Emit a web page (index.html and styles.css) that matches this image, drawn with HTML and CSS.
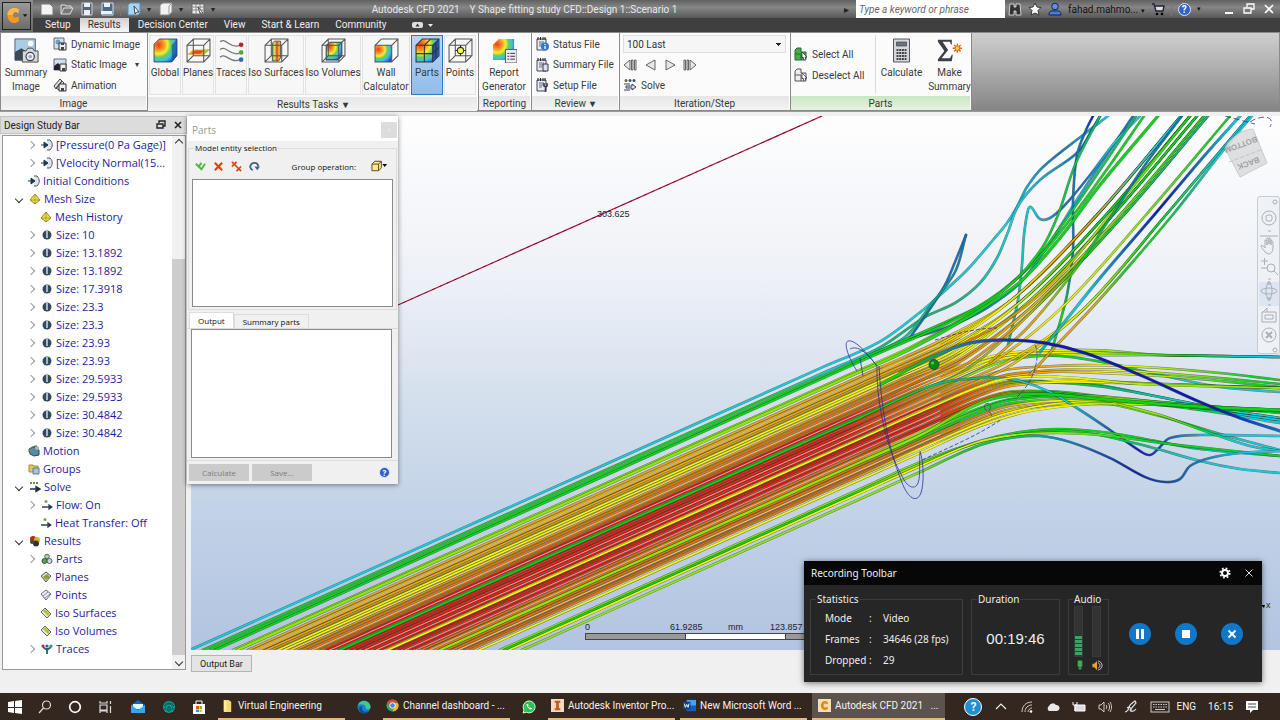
FILE: index.html
```html
<!DOCTYPE html>
<html lang="en">
<head>
<meta charset="utf-8">
<title>Autodesk CFD 2021</title>
<link rel="stylesheet" href="styles.css">
</head>
<body>
<svg class="sprite" aria-hidden="true">
  <defs>
    <radialGradient id="heat" cx="0.2" cy="0.25" r="0.95">
      <stop offset="0" stop-color="#f03a1c"/><stop offset=".25" stop-color="#f79a1e"/><stop offset=".42" stop-color="#f4ec3a"/>
      <stop offset=".58" stop-color="#62cf5a"/><stop offset=".74" stop-color="#3cc0e8"/><stop offset="1" stop-color="#1c4fc0"/>
    </radialGradient>
    <linearGradient id="heatBar" x1="0" x2="1" y1="0" y2="0"><stop offset="0" stop-color="#3cb0d8"/><stop offset=".3" stop-color="#f4e03a"/><stop offset=".55" stop-color="#e23a1c"/><stop offset=".8" stop-color="#f4c03a"/><stop offset="1" stop-color="#3c9ad8"/></linearGradient>
    <symbol id="wire" viewBox="0 0 24 24"><path d="M1 7h16v16H1zM7 1h16v16H7zM1 7l6-6M17 7l6-6M17 23l6-6M1 23l6-6" fill="none" stroke="#555" stroke-width="1"/></symbol>
    <symbol id="i-global" viewBox="0 0 24 24"><path d="M1 6l5-5h17v16l-5 6H1z" fill="url(#heat)" stroke="#335" stroke-width=".8"/><path d="M18 23V7l5-6v16z" fill="#1c4b9c" opacity=".7"/></symbol>
    <symbol id="i-planes" viewBox="0 0 24 24"><path d="M1 16l6-5h16l-6 5z" fill="#f0a82a"/><path d="M5 15l4-3h8l-3 3z" fill="#e2491c"/><path d="M17 16l6-5h-4l-4 5z" fill="#9ccf3c"/><use href="#wire"/></symbol>
    <symbol id="i-traces" viewBox="0 0 26 24"><g fill="none" stroke="#777" stroke-width="1.3"><path d="M1 3c7-5 9 7 20 4"/><path d="M1 11c7-5 9 7 20 4"/><path d="M1 19c7-5 9 6 20 3"/></g><circle cx="23" cy="6" r="2.4" fill="#b22"/><circle cx="23" cy="14" r="2.4" fill="#5a3"/><circle cx="23" cy="21.500" r="2.4" fill="#36b"/></symbol>
    <symbol id="i-isosurf" viewBox="0 0 24 24"><path d="M8 5l2-2h6v16l-2 3H8z" fill="url(#heatBar)" stroke="#543" stroke-width=".8"/><use href="#wire"/></symbol>
    <symbol id="i-isovol" viewBox="0 0 24 24"><path d="M5 7l4-3h11v13l-4 4H5z" fill="url(#heat)" stroke="#245" stroke-width="1"/><use href="#wire"/></symbol>
    <symbol id="i-wall" viewBox="0 0 24 24"><path d="M1 7h16v16H1z" fill="url(#heat)"/><path d="M1 7h16v16H1zM7 1h16v16l-6 6M1 7l6-6M17 7l6-6" fill="none" stroke="#555"/></symbol>
    <symbol id="i-partcube" viewBox="0 0 24 24"><path d="M1 7l6-6h16v16l-6 6H1z" fill="url(#heat)" stroke="#333"/><path d="M17 23V7l6-6v16z" fill="#2453a8"/><path d="M1 7h16v16M9 23V7l6-6M1 15h16l6-6M17 7l6-6M20 20V4" fill="none" stroke="#334" stroke-width="1"/></symbol>
    <symbol id="i-points" viewBox="0 0 24 24"><use href="#wire"/><path d="M12 7v10M7 12h10" stroke="#222"/><circle cx="12" cy="12" r="3" fill="#ef3" stroke="#333"/></symbol>
    <symbol id="i-report" viewBox="0 0 26 26"><path d="M1 7l6-6h16v16l-6 6H1z" fill="url(#heat)"/><path d="M14 12h12v14H14z" fill="#eee" stroke="#556"/><path d="M16 16h2m1 0h5m-8 3h2m1 0h5m-8 3h2m1 0h5" stroke="#334"/></symbol>
    <symbol id="i-summary" viewBox="0 0 27 27"><path d="M1 1h22v23H1z" fill="#a9cde4" stroke="#557"/><path d="M1 15l7-4 6 4v9H1z" fill="#3a4a55"/><circle cx="18" cy="6" r="3" fill="#ffe"/><path d="M9 14h4l2-3h5l2 3h4v12H9z" fill="#d5d9de" stroke="#444"/><circle cx="17.500" cy="20" r="4.500" fill="#eef" stroke="#444" stroke-width="1.300"/><circle cx="17.500" cy="20" r="2" fill="#9ab"/></symbol>
    <symbol id="i-dyn" viewBox="0 0 14 14"><path d="M1 1h10v11H1z" fill="#cfe2ef" stroke="#667"/><circle cx="5" cy="5" r="2.500" fill="#68a0c8"/><path d="M6 6h7v7H6z" fill="#eee" stroke="#333"/><path d="M8 6h3v2H8zM8 10h3v3H8z" fill="#444"/></symbol>
    <symbol id="i-stat" viewBox="0 0 14 14"><path d="M1 1h12v11H1z" fill="#cfe0ea" stroke="#667"/><path d="M1 8l4-3 4 4v3H1z" fill="#223"/><path d="M7 6h6v7H7z" fill="#eee" stroke="#333"/><path d="M9 10h3v3H9z" fill="#444"/></symbol>
    <symbol id="i-anim" viewBox="0 0 14 14"><path d="M1 8l6-7 2 2-6 8zM3 10l6-7 2 2-5 7z" fill="#ddd" stroke="#444"/><path d="M6 6h7v7H6z" fill="#eee" stroke="#333"/><path d="M8 10h3v3H8z" fill="#444"/></symbol>
    <symbol id="i-file" viewBox="0 0 14 14"><path d="M2 2h9v11H2z" fill="#e8ecf0" stroke="#445"/><path d="M3 0v3M5.500 0v3M8 0v3M10 0v3" stroke="#223"/><path d="M4 5h5M4 7h5M4 9h3" stroke="#667"/></symbol>
    <symbol id="i-solve" viewBox="0 0 14 14"><circle cx="3" cy="2.500" r="1.500" fill="#763"/><circle cx="7" cy="2.500" r="1.500" fill="#357"/><circle cx="11" cy="2.500" r="1.500" fill="#357"/><path d="M3 8h6V6l4 3-4 3v-2H3zM1 6h6M1 12h6" fill="#dde" stroke="#345"/></symbol>
    <symbol id="i-selall" viewBox="0 0 14 14"><path d="M1 3l2-2h4v4h5v7l-2 1H1z" fill="#4cae3c" stroke="#264"/><path d="M1 7h6v6" fill="none" stroke="#264"/><path d="M8 5l5 5H11l1 3-2 0-1-3-1 1z" fill="#fff" stroke="#222" stroke-width=".7"/></symbol>
    <symbol id="i-desel" viewBox="0 0 14 14"><path d="M1 3l2-2h4v4h5v7l-2 1H1z" fill="#eee" stroke="#555"/><path d="M1 7h6v6" fill="none" stroke="#555"/><path d="M8 5l5 5H11l1 3-2 0-1-3-1 1z" fill="#fff" stroke="#222" stroke-width=".7"/></symbol>
    <symbol id="i-calc" viewBox="0 0 18 25"><path d="M1 1h16v23H1z" fill="#d4d8dc" stroke="#556"/><path d="M4 4h10v4H4z" fill="#6a7480" stroke="#333" stroke-width=".6"/><path d="M4 12h10M4 15h10M4 18h10M4 21h10" stroke="#444" stroke-width="2" stroke-dasharray="2 .7"/></symbol>
    <symbol id="i-sigma" viewBox="0 0 27 25"><path d="M1 1h15v5h-1l-1-3H6l6 9-7 9h9l2-4h1l-1 7H1v-2l7-9-7-10z" fill="#3a4046"/><path d="M22 5v10M17 10h10M18.500 6.500l7 7M25.500 6.500l-7 7" stroke="#e06a10" stroke-width="1.500"/><circle cx="22" cy="10" r="2.500" fill="#ffc83a" stroke="#e06a10"/></symbol>
    <symbol id="t-bc" viewBox="0 0 12 12"><path d="M6 1h3c3 3 3 7 0 10H6" fill="#dde4ea" stroke="#556"/><path d="M0 6h4M3 3l4 3-4 3z" fill="#1f3a4d" stroke="#1f3a4d"/></symbol>
    <symbol id="t-mesh" viewBox="0 0 12 12"><path d="M6 1l5 6-5 4-5-4z" fill="#f0e040" stroke="#776a20" stroke-width=".8"/><path d="M6 1v10M1 7h10" stroke="#998a30" stroke-width=".7"/></symbol>
    <symbol id="t-size" viewBox="0 0 12 12"><circle cx="6" cy="6" r="4.500" fill="#34495a"/><path d="M6 2v7" stroke="#eef" stroke-width="1.300"/></symbol>
    <symbol id="t-motion" viewBox="0 0 12 12"><path d="M1 4l5-2 5 3v5l-5 1-4-2z" fill="#5f88a8" stroke="#345"/><path d="M1 7c0-6 8-6 8-6" fill="none" stroke="#485" stroke-width="1.300"/><circle cx="9" cy="3" r="2" fill="#9bb"/></symbol>
    <symbol id="t-groups" viewBox="0 0 12 12"><path d="M1 2h4l1 1h4v6H1z" fill="#e6c768" stroke="#a88a38"/><path d="M5 5h6v6H5z" fill="#a8c4dc" stroke="#57a"/></symbol>
    <symbol id="t-solve" viewBox="0 0 12 12"><path d="M1 2h2m1 0h2m1 0h2" stroke="#788a58" stroke-width="2"/><path d="M1 8h8M7 5.500l4 2.500-4 2.500z" stroke="#234" stroke-width="1.300"/></symbol>
    <symbol id="t-flow" viewBox="0 0 12 12"><circle cx="5" cy="2.500" r="1.500" fill="#8a9a60"/><path d="M1 8h8M8 6l3 2-3 2z" stroke="#345" stroke-width="1.300"/></symbol>
    <symbol id="t-results" viewBox="0 0 12 12"><circle cx="4" cy="4" r="3" fill="#b22b1b"/><circle cx="8" cy="5" r="3" fill="#d8b422"/><circle cx="7" cy="8.500" r="3" fill="#333"/><circle cx="3" cy="7" r="2" fill="#353"/></symbol>
    <symbol id="t-parts" viewBox="0 0 12 12"><circle cx="6" cy="3.500" r="2.300" fill="#b9c9b9" stroke="#565"/><circle cx="3.500" cy="8" r="2.500" fill="#6ba04a" stroke="#354"/><circle cx="8.500" cy="8" r="2.500" fill="#ccd6dc" stroke="#566"/></symbol>
    <symbol id="t-planes" viewBox="0 0 12 12"><path d="M1 5l5-4 5 4-5 6z" fill="#d9dcc8" stroke="#555"/><path d="M3 6l4-3 3 3-4 3z" fill="#8aa23a"/></symbol>
    <symbol id="t-points" viewBox="0 0 12 12"><path d="M1 5l5-4 5 4-5 6z" fill="#eef" stroke="#667"/><path d="M3 7l5-4M5 9l5-4" stroke="#889"/></symbol>
    <symbol id="t-iso" viewBox="0 0 12 12"><path d="M1 5l4-4 6 6-4 4z" fill="#e6e9d8" stroke="#667"/><path d="M3 4l5 5 2-2-5-5z" fill="#b2c22a"/></symbol>
    <symbol id="t-trace" viewBox="0 0 12 12"><path d="M6 11V5M6 7L2 4M6 7l4-3" stroke="#267" stroke-width="1.800"/><circle cx="2" cy="3" r="1.600" fill="#c22"/><circle cx="6" cy="3" r="1.600" fill="#26a"/><circle cx="10" cy="3" r="1.600" fill="#399"/></symbol>
  </defs>
</svg>

<header class="top">
  <button class="app" aria-label="Application menu"><svg viewBox="0 0 30 28"><path d="M18 7C14 3 5 5 5 13s8 12 13 6l-1-5c-3 3-6 2-6-1s3-5 6-2z" fill="#f39a1e"/><path d="M18 7l-1 4c-3-3-6-1-6 2H5c0-8 9-10 13-6z" fill="#ffb94a"/><path d="M22 12h5l-2.500 3z" fill="#111"/></svg></button>
  <div class="topcol">
    <div class="titlebar">
      <div class="quick">
        <button aria-label="New"><svg viewBox="0 0 14 14"><path d="M1 2h9l3 3v8H1z" fill="#f4f4f4" stroke="#777"/></svg></button>
        <button aria-label="Open"><svg viewBox="0 0 14 14"><path d="M1 12V3h4l1 1h5v2M1 12l3-6h9l-3 6z" fill="#777" stroke="#ddd"/></svg></button>
        <button aria-label="Save"><svg viewBox="0 0 14 14"><path d="M2 1h10v12H2z" fill="#566573" stroke="#ccd"/><path d="M4 1h6v4H4zM4 8h6v5H4z" fill="#eee"/></svg></button>
        <button aria-label="Save all"><svg viewBox="0 0 14 14"><path d="M2 1h11v12H2z" fill="#4a6c88" stroke="#cde"/><path d="M4 1h6v4H4zM1 9h11v3H1z" fill="#eef"/></svg></button>
        <i class="vsep"></i>
        <button aria-label="Select"><svg viewBox="0 0 14 14"><path d="M1 3l2-2h10v10l-2 2H1z" fill="#a9d4ee" stroke="#5b8fb0"/><path d="M7 4l5 6H9.500L8 12z" fill="#fff" stroke="#222" stroke-width=".8"/></svg></button>
        <small>▾</small>
        <button aria-label="Shading"><svg viewBox="0 0 14 14"><path d="M1 3l3-2h9v9l-3 3H1z" fill="#f2f2f2" stroke="#888"/><path d="M10 13V4l3-3" fill="none" stroke="#999"/></svg></button>
        <small>▾</small>
        <button aria-label="Table"><svg viewBox="0 0 14 14"><path d="M1 2h12v10H1z" fill="#eee" stroke="#666"/><path d="M1 5h12M1 8h12M5 2v10M9 2v10" stroke="#888"/><path d="M7 5l5 6H9z" fill="#fff" stroke="#222" stroke-width=".7"/></svg></button>
        <small>▾</small>
      </div>
      <h1>Autodesk CFD 2021 &nbsp;&nbsp; Y Shape fitting study CFD::Design 1::Scenario 1</h1>
      <span class="arrow">▸</span>
      <input class="search" type="text" placeholder="Type a keyword or phrase" aria-label="Search help">
      <div class="account">
        <button aria-label="Find"><svg viewBox="0 0 14 14"><path d="M2 2h4v3h2V2h4l1 11H8V9H6v4H1z" fill="#333" stroke="#eee" stroke-width=".8"/></svg></button>
        <button aria-label="Favourites"><svg viewBox="0 0 14 14"><path d="M7 1l2 4 4 .5-3 3 1 4.500-4-2-4 2 1-4.500-3-3L5 5z" fill="#fff" stroke="#333"/></svg></button>
        <button aria-label="Profile"><svg viewBox="0 0 14 14"><circle cx="7" cy="4.500" r="3.300" fill="#5f90e8" stroke="#124"/><path d="M1 13c0-5 3-4 6-4s6-1 6 4z" fill="#4a7ade" stroke="#124"/></svg></button>
        <button class="user">fahad.mahmo... <small>▾</small></button>
        <button aria-label="Store"><svg viewBox="0 0 14 14"><path d="M1 2h2l2 7h7l1-5H4" fill="#ddd" stroke="#223" stroke-width="1.400"/><circle cx="6" cy="12" r="1.300"/><circle cx="11" cy="12" r="1.300"/></svg></button>
        <i class="vsep"></i>
        <button class="help" aria-label="Help">?</button>
        <small>▾</small>
      </div>
      <div class="winbtns">
        <button aria-label="Minimise"><svg viewBox="0 0 12 12"><path d="M2 10h8" stroke="#fff" stroke-width="2"/></svg></button>
        <button aria-label="Restore"><svg viewBox="0 0 12 12"><path d="M4 4V1h7v5H8M1 5h7v5H1z" fill="none" stroke="#fff" stroke-width="1.300"/></svg></button>
        <button aria-label="Close"><svg viewBox="0 0 12 12"><path d="M2 2l8 8M10 2l-8 8" stroke="#fff" stroke-width="1.600"/></svg></button>
      </div>
    </div>
    <nav class="tabs">
      <button>Setup</button><button class="on">Results</button><button>Decision Center</button><button>View</button><button>Start &amp; Learn</button><button>Community</button>
      <button class="mini" aria-label="Minimise ribbon"><svg viewBox="0 0 22 8"><rect x="0" y="1" width="11" height="6" rx="2" fill="#ddd"/><path d="M3.500 5.500l2-3 2 3z" fill="#333"/><path d="M16 3h5l-2.500 3z" fill="#eee"/></svg></button>
    </nav>
  </div>
</header>

<section class="ribbon">
  <div class="panel p-image">
    <div class="body">
      <button class="big"><svg><use href="#i-summary"/></svg>Summary<br>Image</button>
      <div class="stack">
        <button><svg><use href="#i-dyn"/></svg>Dynamic Image</button>
        <button><svg><use href="#i-stat"/></svg>Static Image<small>▾</small></button>
        <button><svg><use href="#i-anim"/></svg>Animation</button>
      </div>
    </div>
    <footer>Image</footer>
  </div>
  <div class="panel p-tasks">
    <div class="body">
      <button class="big box"><svg><use href="#i-global"/></svg>Global</button>
      <button class="big box"><svg><use href="#i-planes"/></svg>Planes</button>
      <button class="big box"><svg><use href="#i-traces"/></svg>Traces</button>
      <button class="big box wide"><svg><use href="#i-isosurf"/></svg>Iso Surfaces</button>
      <button class="big box wide"><svg><use href="#i-isovol"/></svg>Iso Volumes</button>
      <button class="big box mid"><svg><use href="#i-wall"/></svg>Wall<br>Calculator</button>
      <button class="big box active"><svg><use href="#i-partcube"/></svg>Parts</button>
      <button class="big box"><svg><use href="#i-points"/></svg>Points</button>
    </div>
    <footer>Results Tasks <b>▾</b></footer>
  </div>
  <div class="panel p-rep">
    <div class="body"><button class="big"><svg><use href="#i-report"/></svg>Report<br>Generator</button></div>
    <footer>Reporting</footer>
  </div>
  <div class="panel p-review">
    <div class="body"><div class="stack">
      <button><svg viewBox="0 0 14 14"><use href="#i-file"/><circle cx="10" cy="9.500" r="4" fill="#2b78d8"/><path d="M10 7v1m0 1v3" stroke="#fff" stroke-width="1.300"/></svg>Status File</button>
      <button><svg viewBox="0 0 14 14"><use href="#i-file"/><path d="M8 6h5v7H8z" fill="#dde" stroke="#335"/></svg>Summary File</button>
      <button><svg viewBox="0 0 14 14"><use href="#i-file"/><path d="M9 5v3l1.500 1L12 8V5M10.500 9v5" fill="none" stroke="#335" stroke-width="1.500"/></svg>Setup File</button>
    </div></div>
    <footer>Review <b>▾</b></footer>
  </div>
  <div class="panel p-iter">
    <div class="body"><div class="stack">
      <select aria-label="Iteration"><option>100 Last</option></select>
      <div class="steps">
        <button aria-label="First"><svg viewBox="0 0 14 14"><path d="M7 2v10L1 7zM8.500 2H10v10H8.500zM11.500 2H13v10h-1.500z"/></svg></button>
        <button aria-label="Previous"><svg viewBox="0 0 14 14"><path d="M12 2v10L3 7z"/></svg></button>
        <button aria-label="Next"><svg viewBox="0 0 14 14"><path d="M3 2v10l9-5z"/></svg></button>
        <button aria-label="Last"><svg viewBox="0 0 14 14"><path d="M7 2v10l6-5zM1 2h1.500v10H1zM4 2h1.500v10H4z"/></svg></button>
      </div>
      <button><svg><use href="#i-solve"/></svg>Solve</button>
    </div></div>
    <footer>Iteration/Step</footer>
  </div>
  <div class="panel p-parts">
    <div class="body">
      <div class="stack two">
        <button><svg><use href="#i-selall"/></svg>Select All</button>
        <button><svg><use href="#i-desel"/></svg>Deselect All</button>
      </div>
      <button class="big"><svg><use href="#i-calc"/></svg>Calculate</button>
      <button class="big"><svg><use href="#i-sigma"/></svg>Make<br>Summary</button>
    </div>
    <footer class="green">Parts</footer>
  </div>
  <div class="filler"></div>
</section>

<main class="work">
  <aside class="study">
    <div class="bar"><h2>Design Study Bar</h2>
      <button aria-label="Float"><svg viewBox="0 0 10 10"><path d="M3 3V1h6v5H7M1 4h6v4H1z" fill="none" stroke="#222" stroke-width="1.400"/></svg></button>
      <button aria-label="Close"><svg viewBox="0 0 10 10"><path d="M2 2l6 6M8 2l-6 6" stroke="#222" stroke-width="1.600"/></svg></button>
    </div>
    <div class="treebox">
      <ul class="tree">
        <li class="l2 c"><svg><use href="#t-bc"/></svg>[Pressure(0 Pa Gage)]</li>
        <li class="l2 c"><svg><use href="#t-bc"/></svg>[Velocity Normal(15...</li>
        <li class="l1"><svg><use href="#t-bc"/></svg>Initial Conditions</li>
        <li class="l1 o"><svg><use href="#t-mesh"/></svg>Mesh Size</li>
        <li class="l2"><svg><use href="#t-mesh"/></svg>Mesh History</li>
        <li class="l2 c"><svg><use href="#t-size"/></svg>Size: 10</li>
        <li class="l2 c"><svg><use href="#t-size"/></svg>Size: 13.1892</li>
        <li class="l2 c"><svg><use href="#t-size"/></svg>Size: 13.1892</li>
        <li class="l2 c"><svg><use href="#t-size"/></svg>Size: 17.3918</li>
        <li class="l2 c"><svg><use href="#t-size"/></svg>Size: 23.3</li>
        <li class="l2 c"><svg><use href="#t-size"/></svg>Size: 23.3</li>
        <li class="l2 c"><svg><use href="#t-size"/></svg>Size: 23.93</li>
        <li class="l2 c"><svg><use href="#t-size"/></svg>Size: 23.93</li>
        <li class="l2 c"><svg><use href="#t-size"/></svg>Size: 29.5933</li>
        <li class="l2 c"><svg><use href="#t-size"/></svg>Size: 29.5933</li>
        <li class="l2 c"><svg><use href="#t-size"/></svg>Size: 30.4842</li>
        <li class="l2 c"><svg><use href="#t-size"/></svg>Size: 30.4842</li>
        <li class="l1"><svg><use href="#t-motion"/></svg>Motion</li>
        <li class="l1"><svg><use href="#t-groups"/></svg>Groups</li>
        <li class="l1 o"><svg><use href="#t-solve"/></svg>Solve</li>
        <li class="l2 c"><svg><use href="#t-flow"/></svg>Flow: On</li>
        <li class="l2"><svg><use href="#t-flow"/></svg>Heat Transfer: Off</li>
        <li class="l1 o"><svg><use href="#t-results"/></svg>Results</li>
        <li class="l2 c"><svg><use href="#t-parts"/></svg>Parts</li>
        <li class="l2"><svg><use href="#t-planes"/></svg>Planes</li>
        <li class="l2"><svg><use href="#t-points"/></svg>Points</li>
        <li class="l2"><svg><use href="#t-iso"/></svg>Iso Surfaces</li>
        <li class="l2"><svg><use href="#t-iso"/></svg>Iso Volumes</li>
        <li class="l2 c"><svg><use href="#t-trace"/></svg>Traces</li>
      </ul>
      <div class="scroll"><i class="up"></i><span></span><i class="down"></i></div>
    </div>
  </aside>

  <div class="right">
    <div class="view">
      <svg class="scene" viewBox="191 116 1089 534" preserveAspectRatio="xMinYMin slice" role="img" aria-label="Flow traces through the Y fitting">
        <defs id="grads"></defs>
        <path d="M822 116L398 305" stroke="#a0103c" stroke-width="1.200"/>
        <path d="M822 116L398 305" stroke="#500" stroke-width="1" stroke-dasharray="3 5" opacity=".5"/>
        <text x="597" y="217" class="dim">303.625</text>
        <g id="traces" fill="none" stroke-linecap="round"></g>
        <g class="outline">
          <path d="M877 366c-7-9-21-27-29-25-5 2 1 18 9 30M850 349c8-4 16 3 27 17M860 358l3 18"/>
          <path d="M877 366c-1 30 8 80 24 108 5 12 12 16 16 11 4-6 2-20 3-33M879 366c2 40 9 82 22 114 7 20 16 23 20 13 3-9 3-30-1-42"/>
          <path d="M922 460c30-14 55-24 80-41M1035 345c5 8 2 34-18 52M935 340c20-6 42-12 62-12" stroke-dasharray="4 2"/>
          <path d="M1225 116l30 8M1250 122c12-8 26-6 20 5" stroke-dasharray="6 3"/>
        </g>
        <path d="M987 411c-5-4-2-9 2-7 4 3-1 6 0 8l3 4" fill="none" stroke="#555" stroke-width="1"/>
        <circle cx="934" cy="364.500" r="5" fill="#0a8a10" stroke="#045" stroke-width=".8"/><circle cx="932.500" cy="363" r="1.500" fill="#4fd04f"/>
        <g opacity=".9"><path d="M1225 148c4-8 14-18 28-19l14 34-27 14z" fill="#dcdddf" stroke="#c4c6ca"/><path d="M1229 162l34-13" stroke="#bbb" stroke-dasharray="4 2"/><text class="cube" transform="rotate(160 1241 144)" x="1224" y="146">BOTTOM</text><text class="cube" transform="rotate(160 1250 163)" x="1240" y="166">BACK</text></g>
        <g class="scale"><rect x="585.500" y="633.500" width="100" height="6" fill="#999"/><rect x="685.500" y="633.500" width="100" height="6" fill="#fff"/><rect x="785.500" y="633.500" width="100" height="6" fill="#999"/>
          <text x="585" y="630">0</text><text x="670" y="630">61.9285</text><text x="728" y="630">mm</text><text x="770" y="630">123.857</text><text x="1266" y="608">x</text><path d="M1261 605h4l-1 3z"/></g>
      </svg>
      <div class="navbar">
        <svg viewBox="0 0 22 156" fill="none" stroke="#aab0b6"><circle cx="17" cy="5" r="2"/><circle cx="11" cy="21" r="7"/><rect x="8" y="18" width="6" height="6" rx="2"/><path d="M10 34h3M2 39h18"/><path d="M7 55c-3-4-5-6-3-7l3 3V43c2-1 2 3 2 5V41c2-1 2 3 2 6v-6c2-1 2 4 2 7v-5c2 0 2 4 2 6 0 5-1 8-5 8z"/><path d="M3 64h7M6.500 61v7M3 71h7"/><circle cx="13" cy="71" r="4"/><path d="M16 74l4 4M10 82h3"/><rect x="1" y="85" width="20" height="24" fill="#dbe6f2" stroke="none"/><ellipse cx="11" cy="94" rx="8" ry="3"/><ellipse cx="11" cy="94" rx="3" ry="8"/><path d="M11 84l-2 3h4zM11 104l-2-3h4zM10 108h3"/><path d="M4 115h14v10H4zM7 118h8v4H7zM5 115l4-4v4"/><circle cx="11" cy="138" r="7"/><path d="M8 135l6 6M14 135l-6 6" stroke-width="2"/><circle cx="17" cy="153" r="2"/></svg>
      </div>
    </div>
    <div class="below"><button>Output Bar</button></div>
  </div>

  <section class="parts">
    <div class="ptitle"><h2>Parts</h2><button aria-label="Close">×</button></div>
    <fieldset>
      <legend>Model entity selection</legend>
      <div class="ptools">
        <button aria-label="Accept"><svg viewBox="0 0 12 12"><path d="M1 3l3 3 3-4M4 6l3 3 4-6" fill="none" stroke="#4db63a" stroke-width="2"/></svg></button>
        <button aria-label="Delete"><svg viewBox="0 0 12 12"><path d="M2 2l8 8M10 2l-8 8" stroke="#e04010" stroke-width="2.300"/></svg></button>
        <button aria-label="Delete all"><svg viewBox="0 0 12 12"><path d="M1 1l5 5M6 1L1 6M6 6l5 5M11 6l-5 5" stroke="#e04010" stroke-width="1.800"/></svg></button>
        <button aria-label="Redo"><svg viewBox="0 0 12 12"><path d="M4 10C-1 7 2 2 6 2c3 0 4 2 4 4" fill="none" stroke="#47617c" stroke-width="2"/><path d="M6 6h6l-3 4z" fill="#47617c"/></svg></button>
        <span>Group operation:</span>
        <button class="grp" aria-label="Group"><svg viewBox="0 0 18 12"><path d="M1 4l3-3h7v7l-3 3H1z" fill="#ffe98a" stroke="#543"/><path d="M1 4h7v7M8 4l3-3" fill="none" stroke="#543"/><path d="M12 4h5l-2.500 3z"/></svg></button>
      </div>
      <div class="list one"></div>
    </fieldset>
    <div class="ptabs"><button class="on">Output</button><button>Summary parts</button></div>
    <div class="list second"></div>
    <div class="pfoot"><button disabled>Calculate</button><button disabled>Save...</button><button class="help" aria-label="Help">?</button></div>
  </section>

  <section class="rec">
    <div class="rtitle"><h2>Recording Toolbar</h2>
      <button aria-label="Settings"><svg viewBox="0 0 12 12"><circle cx="6" cy="6" r="3" fill="none" stroke="#fff" stroke-width="2"/><circle cx="6" cy="6" r="4.800" fill="none" stroke="#fff" stroke-width="1.600" stroke-dasharray="1.800 1.970"/></svg></button>
      <button aria-label="Close"><svg viewBox="0 0 12 12"><path d="M2.500 2.500l7 7M9.500 2.500l-7 7" stroke="#ddd"/></svg></button></div>
    <div class="rbody">
      <fieldset class="stats"><legend>Statistics</legend>
        <dl><dt>Mode</dt><dd>:</dd><dd>Video</dd><dt>Frames</dt><dd>:</dd><dd>34646 (28 fps)</dd><dt>Dropped</dt><dd>:</dd><dd>29</dd></dl></fieldset>
      <fieldset class="dur"><legend>Duration</legend><time>00:19:46</time></fieldset>
      <fieldset class="aud"><legend>Audio</legend>
        <div class="meters"><i class="lvl"></i><i></i></div>
        <div class="aicons"><svg viewBox="0 0 10 12"><path d="M3 1h4v6H3zM5 7v4M3 9h4" fill="#3fae5c" stroke="#3fae5c"/></svg><svg viewBox="0 0 12 12"><path d="M1 4h2l3-3v10L3 8H1z" fill="#f0a030"/><path d="M7 3c3 1 3 5 0 6M7 1c6 1 6 9 0 10" fill="none" stroke="#ccc"/></svg></div></fieldset>
      <div class="ctl">
        <button aria-label="Pause"><svg viewBox="0 0 22 22"><path d="M7 6h3v10H7zM12 6h3v10h-3z" fill="#fff"/></svg></button>
        <button aria-label="Stop"><svg viewBox="0 0 22 22"><path d="M7 7h8v8H7z" fill="#fff"/></svg></button>
        <button aria-label="Cancel"><svg viewBox="0 0 22 22"><path d="M7.500 7.500l7 7M14.500 7.500l-7 7" stroke="#fff" stroke-width="1.800"/></svg></button>
      </div>
    </div>
  </section>
</main>

<footer class="taskbar">
  <div class="pins">
    <button aria-label="Start"><svg viewBox="0 0 14 14"><path d="M0 2l6-1v6H0zM7 1l7-1v7H7zM0 8h6v5l-6-1zM7 8h7v6l-7-1z" fill="#fff"/></svg></button>
    <button aria-label="Search"><svg viewBox="0 0 14 14"><circle cx="8.500" cy="5" r="4" fill="none" stroke="#ddd" stroke-width="1.200"/><path d="M5.500 8L1 13" stroke="#ddd" stroke-width="1.200"/></svg></button>
    <button aria-label="Cortana"><svg viewBox="0 0 14 14"><circle cx="7" cy="7" r="5.300" fill="none" stroke="#fff" stroke-width="1.700"/></svg></button>
    <button aria-label="Task view"><svg viewBox="0 0 14 14"><path d="M1 1v2h7V1M1 5h7v5H1zM1 13v-2h7v2M11.500 1v3M11.500 6v7" fill="none" stroke="#ddd" stroke-width="1.200"/></svg></button>
    <button aria-label="Mail"><svg viewBox="0 0 14 14"><path d="M0 5l7-5 7 5v8H0z" fill="#1565b8"/><path d="M2 4h10v5H2z" fill="#dff"/><path d="M0 5l7 5 7-5v8H0z" fill="#39a5ea"/></svg></button>
    <button aria-label="Security"><svg viewBox="0 0 14 14"><circle cx="7" cy="7" r="6" fill="#12a09a"/><path d="M3 10c0-8 8-8 8 0M5 11c0-6 4-6 4 0M7 7v5M2 6c2-4 8-4 10 0" fill="none" stroke="#053f40" stroke-width=".9"/></svg></button>
    <button aria-label="Store"><svg viewBox="0 0 14 14"><path d="M4 4V1h6v3" fill="none" stroke="#fff"/><path d="M1 4h12v10H1z" fill="#fff"/><path d="M4 6h3v3H4z" fill="#f25022"/><path d="M7.500 6H10v3H7.500z" fill="#7fba00"/><path d="M4 9.500h3V12H4z" fill="#00a4ef"/><path d="M7.500 9.500H10V12H7.500z" fill="#ffb900"/></svg></button>
  </div>
  <button class="task"><svg viewBox="0 0 14 14"><path d="M3 1h5l3 2v11H3z" fill="#f7d774"/><path d="M3 1l3 2v11l-3-1z" fill="#ffeaa0"/></svg>Virtual Engineering</button>
  <button class="lone" aria-label="Edge"><svg viewBox="0 0 14 14"><circle cx="7" cy="7" r="6.500" fill="#1b7fd0"/><path d="M1 5c2-6 12-5 12.500 2 0 3-4 3-5 1 1-3-4-5-7.500-3z" fill="#45c98a"/><path d="M5 7c-1 4 3 6 7 4-3 4-9 3-10-2 0-2 2-3 3-2z" fill="#0c4c96"/></svg></button>
  <button class="task"><svg viewBox="0 0 14 14"><circle cx="7" cy="7" r="6.500" fill="#3aa757"/><path d="M1.400 3.700A6.500 6.500 0 0 1 12.600 3.700L7 4z" fill="#ea4335"/><path d="M13 4.500A6.500 6.500 0 0 1 7 13.500L10 7 8 4z" fill="#fbbc05"/><path d="M1.400 3.700L4.500 8 7 4h5.500z" fill="#ea4335"/><circle cx="7" cy="7" r="3" fill="#4285f4" stroke="#fff"/></svg>Channel dashboard - ...</button>
  <button class="lone" aria-label="WhatsApp"><svg viewBox="0 0 14 14"><path d="M1 13l1-3a6 6 0 1 1 2.500 2.300z" fill="#28c24c" stroke="#e8ffe8" stroke-width=".9"/><path d="M4.500 4c0 3 3 6 5.500 5.500l.3-1.300-1.600-.8-.8.700L6 6.300l.6-.8L6 4z" fill="#fff"/></svg></button>
  <button class="task"><svg viewBox="0 0 14 14"><path d="M0 0h14v14H0z" fill="#f3d9c2"/><path d="M4 2h6v2H8.500v6H10v2H4v-2h1.500V4H4z" fill="#b8621b"/></svg>Autodesk Inventor Pro...</button>
  <button class="task"><svg viewBox="0 0 14 14"><path d="M4 1h10v12H4z" fill="#41a5ee"/><path d="M4 7h10v6H4z" fill="#185abd"/><path d="M0 3h8v8H0z" fill="#103f91"/><path d="M1.500 5l1 4L4 6l1.500 3 1-4" fill="none" stroke="#fff"/></svg>New Microsoft Word ...</button>
  <button class="task active"><svg viewBox="0 0 14 14"><path d="M0 0h14v14H0z" fill="#f4dfb8"/><path d="M11 4C8 0 3 3 3 7s5 7 8 3l-1-2c-2 2-4 1-4-1s2-3 4-1z" fill="#e8890c"/></svg>Autodesk CFD 2021 &nbsp; ...</button>
  <div class="tray">
    <button class="q" aria-label="Get help">?</button>
    <button aria-label="Show hidden icons"><svg viewBox="0 0 14 14"><path d="M2 9l5-5 5 5" fill="none" stroke="#eee" stroke-width="1.200"/></svg></button>
    <button aria-label="Network"><svg viewBox="0 0 14 14"><path d="M2 12C2 6 6 2 12 2M5 12c0-4 3-7 7-7M8 12c0-2 2-4 4-4" fill="none" stroke="#ccc"/><circle cx="11" cy="11.500" r="1.300" fill="#fff"/></svg></button>
    <button aria-label="OneDrive"><svg viewBox="0 0 14 14"><path d="M3 11a3 3 0 0 1 0-5 4 4 0 0 1 7-1 3 3 0 0 1 1 6z" fill="#e8e8e8"/></svg></button>
    <button aria-label="Battery"><svg viewBox="0 0 14 14"><path d="M3 5h10v6H3z" fill="#ddd" stroke="#fff"/><path d="M1 2v3h4V2M3 5v6" fill="none" stroke="#fff"/></svg></button>
    <button aria-label="Volume"><svg viewBox="0 0 14 14"><path d="M1 5h2l3-3v10L3 9H1zM8 5c1 1 1 3 0 4M10 3c2 2 2 6 0 8M12 2c2 3 2 7 0 10" fill="none" stroke="#ccc"/></svg></button>
    <button aria-label="Pen"><svg viewBox="0 0 14 14"><path d="M1 12c5-1 3-6 6-8l4-3 1 2-5 6c-3 2 2 4 5 0M3 8c2-2 5 0 4 3" fill="none" stroke="#ddd" stroke-width="1.200"/></svg></button>
    <button aria-label="Keyboard"><svg class="kb" viewBox="0 0 20 12"><rect x="1" y="1" width="18" height="10" fill="none" stroke="#ccc"/><path d="M3 3.500h14M3 6h14" stroke="#ccc" stroke-dasharray="1.500 1"/><path d="M5 8.500h10" stroke="#ccc"/></svg></button>
    <span>ENG</span><time>16:15</time>
    <button aria-label="Notifications"><svg viewBox="0 0 14 14"><path d="M1 1h12v9H8l-3 3v-3H1z" fill="#fff"/><path d="M3 4h8M3 7h8" stroke="#444"/></svg></button>
  </div>
</footer>
<script src="traces.js"></script>
</body>
</html>
```
FILE: styles.css
```css
* { box-sizing: border-box; margin: 0; padding: 0; }
html, body { height: 100%; }
body { display: flex; flex-direction: column; overflow: hidden; background: #f0f0f0; font-family: Roboto, "Noto Sans", sans-serif; font-size: 10px; color: #3a3a3a; }
button { border: 0; background: none; font: inherit; color: inherit; white-space: nowrap; }
h1, h2 { font: inherit; }
ul { list-style: none; }
fieldset { border: 1px solid #dcdcdc; min-width: 0; }
svg { display: block; flex: none; }
.sprite { position: absolute; width: 0; height: 0; }

.top { display: flex; height: 32px; flex: none; background: #3f3f3f; }
.app { width: 33px; background: linear-gradient(#8c8c8c, #6a6a6a); padding: 2px 0 2px 2px; }
.app svg { width: 29px; height: 28px; border: 1px solid #222; background: linear-gradient(#9a9a9a, #6c6c6c); }
.topcol { flex: 1; min-width: 0; display: flex; flex-direction: column; }
.titlebar { height: 18px; display: flex; align-items: center; background: linear-gradient(#606060, #868686 40%, #585858); color: #e8e8e8; }
.quick { display: flex; align-items: center; gap: 6px; padding-left: 7px; }
.quick svg { width: 14px; height: 14px; }
.quick small { font-size: 8px; color: #222; width: 4px; margin-right: 2px; }
.vsep { width: 1px; height: 14px; background: #777; }
.titlebar h1 { flex: 1; text-align: center; white-space: nowrap; padding-right: 12px; }
.arrow { width: 12px; color: #222; }
.search { width: 149px; height: 18px; border: 0; background: #fff; font: italic 10px Roboto, "Noto Sans", sans-serif; padding-left: 3px; }
.search::placeholder { color: #666; opacity: 1; }
.account { display: flex; align-items: center; gap: 6px; padding-left: 3px; color: #111; width: 212px; }
.account svg { width: 14px; height: 14px; }
.account small { font-size: 7px; }
.help { width: 13px; height: 13px; line-height: 11px; border-radius: 50%; background: #2d62c8; border: 1px solid #dde6f8; color: #fff; font-weight: bold; }
.winbtns { display: flex; gap: 8px; width: 63px; padding-left: 6px; }
.winbtns svg { width: 12px; height: 12px; }
.tabs { height: 14px; display: flex; align-items: stretch; padding-left: 4px; color: #eee; line-height: 14px; }
.tabs button { padding: 0 8px; }
.tabs .on { background: linear-gradient(#d0d0d0, #f6f6f6); color: #333; margin: 0 1px; }
.tabs .mini { padding-left: 18px; }
.tabs .mini svg { width: 22px; height: 8px; }

.ribbon { height: 80px; flex: none; display: flex; gap: 1px; background: #8a8a8a; padding: 1px; border-bottom: 1px solid #999; }
.panel { display: flex; flex-direction: column; background: #fbfbfb; border-right: 1px solid #fff; flex: none; }
.panel .body { flex: 1; display: flex; padding: 2px 1px; gap: 1px; }
.panel footer { height: 14px; line-height: 15px; text-align: center; background: linear-gradient(#e6e6e6, #f4f4f4); }
.panel footer.green { background: linear-gradient(#c9e6c2, #e4f3df); }
.panel footer b { margin-left: 2px; }
.p-image { width: 146px; } .p-tasks { width: 330px; } .p-rep { width: 52px; } .p-review { width: 87px; } .p-iter { width: 170px; } .p-parts { width: 180px; }
.filler { flex: 1; background: linear-gradient(#cfcfcf, #868686); }
.big { display: flex; flex-direction: column; align-items: center; padding-top: 3px; line-height: 14px; flex: none; }
.big svg { width: 25px; height: 25px; margin-bottom: 3px; }
.p-image .big { width: 48px; }
.box { width: 32px; border: 1px solid #e2e2e2; padding-top: 2px; background: #f7f7f7; }
.wide { width: 56px; } .mid { width: 48px; }
.active.box { background: linear-gradient(#b9d6f4, #8fbdec); border-color: #2f76bd; }
.p-rep .big { width: 48px; }
.p-parts .body { gap: 3px; }
.p-parts .big { width: 45px; }
.stack { display: flex; flex-direction: column; justify-content: space-between; padding: 0 2px; flex: 1; }
.stack > button { display: flex; align-items: center; gap: 4px; height: 18px; }
.stack button svg { width: 14px; height: 14px; }
.stack small { font-size: 8px; margin-left: 4px; }
.stack.two { justify-content: center; gap: 3px; border-right: 1px solid #ddd; flex: none; width: 84px; }
.p-iter select { appearance: none; width: 100%; height: 18px; font: inherit; color: #333; padding-left: 3px; border: 1px solid #ddd;
  background: linear-gradient(45deg, transparent 50%, #222 50%) right 6px center / 3px 3px no-repeat, linear-gradient(-45deg, transparent 50%, #222 50%) right 3px center / 3px 3px no-repeat, #f6f6f6; }
.steps { display: flex; gap: 6px; }
.steps svg { fill: #e8e8e8; stroke: #555; stroke-width: .9; }

.work { flex: 1; min-height: 0; display: flex; position: relative; padding-top: 4px; }
.study { width: 187px; flex: none; display: flex; flex-direction: column; padding-bottom: 23px; }
.bar { height: 18px; flex: none; display: flex; align-items: center; gap: 7px; background: #dcdcdc; border: 1px solid #c4c4c4; padding: 0 3px; color: #222; }
.bar h2 { flex: 1; }
.bar svg { width: 10px; height: 10px; }
.treebox { flex: 1; min-height: 0; margin: 1px 1px 0 2px; border: 1px solid #999; background: #fff; display: flex; }
.tree { flex: 1; min-width: 0; overflow: hidden; color: #1d1d9c; font-family: "Open Sans", "Noto Sans", sans-serif; font-size: 11px; }
.tree li { height: 18px; line-height: 18px; display: flex; align-items: center; white-space: nowrap; gap: 3px; }
.tree svg { width: 12px; height: 12px; }
.tree li::before { content: ""; width: 5px; height: 5px; margin-right: 4px; flex: none; }
.l1 { padding-left: 13px; } .l2 { padding-left: 25px; }
.tree .c::before { border: solid #999; border-width: 1px 1px 0 0; rotate: 45deg; }
.tree .o::before { border: solid #333; border-width: 0 1px 1px 0; rotate: 45deg; }
.scroll { width: 13px; background: #f1f1f1; display: flex; flex-direction: column; align-items: center; justify-content: space-between; }
.scroll span { width: 13px; flex: 1; margin-top: 109px; background: #cdcdcd; }
.scroll i { width: 6px; height: 6px; border: solid #333; margin: 4px 0; flex: none; rotate: 45deg; }
.scroll .up { border-width: 1px 0 0 1px; }
.scroll .down { border-width: 0 1px 1px 0; }

.right { flex: 1; min-width: 0; display: flex; flex-direction: column; padding-left: 4px; }
.view { flex: 1; min-height: 0; position: relative; background: linear-gradient(#fefefe, #eef1f7 30%, #d2deec 55%, #bfd0e6 78%, #b2c4e0); }
.scene { width: 100%; height: 100%; position: absolute; inset: 0; }
.scene text { font-family: "Liberation Sans", sans-serif; font-size: 9px; fill: #223; }
.scene .cube { font-size: 8px; font-weight: bold; fill: #999; }
.outline { fill: none; stroke: #2a2a9a; stroke-width: .9; opacity: .85; }
.scale rect { stroke: #444; }
.navbar { position: absolute; right: 0; top: 80px; width: 23px; height: 158px; border: 1px solid #c8ccd0; border-radius: 3px; background: #eef1f5; }
.navbar svg { width: 22px; height: 156px; }
.below { height: 43px; flex: none; padding-top: 5px; }
.below button { width: 61px; height: 17px; border: 1px solid #b4b4b4; background: #e4e4e4; font-size: 9px; color: #222; }

.parts { position: absolute; left: 187px; top: 4px; width: 211px; height: 368px; background: #f0f0f0; box-shadow: 0 1px 5px #0007; font-family: "Open Sans", sans-serif; font-size: 8px; color: #111; display: flex; flex-direction: column; }
.ptitle { height: 25px; background: #fff; display: flex; align-items: center; justify-content: space-between; padding: 2px 1px 0 5px; color: #999; }
.ptitle h2 { font-size: 10px; }
.ptitle button { width: 16px; height: 16px; background: #dcdcdc; color: #eee; }
.parts fieldset { margin: 2px 1px 0; padding: 0 3px 2px; }
.parts legend { margin-left: 2px; padding: 0 1px; line-height: 10px; }
.ptools { height: 26px; display: flex; align-items: center; gap: 7px; padding: 0 5px 0 3px; }
.ptools svg { width: 11px; height: 11px; }
.ptools span { margin-left: auto; margin-right: 8px; }
.ptools .grp svg { width: 17px; height: 12px; }
.list { border: 1px solid #8a8a8a; background: #fff; }
.one { height: 128px; }
.ptabs { display: flex; align-items: flex-end; padding: 2px 0 0 2px; border-bottom: 1px solid #dcdcdc; }
.ptabs button { height: 14px; padding: 0 8px; border: 1px solid #dcdcdc; border-bottom: 0; }
.ptabs .on { background: #fff; height: 16px; }
.second { flex: 1; margin: 0 6px 2px 4px; }
.pfoot { height: 24px; display: flex; align-items: center; gap: 3px; padding: 0 8px 0 2px; border-top: 1px solid #ddd; }
.pfoot button:disabled { width: 60px; height: 17px; background: #cbcbcb; color: #7c7c7c; }
.pfoot .help { width: 11px; height: 11px; line-height: 9px; margin-left: auto; }

.rec { position: absolute; right: 18px; bottom: 11px; width: 458px; background: #262626; color: #eee; font-family: "Noto Sans", sans-serif; box-shadow: 0 1px 6px #0008; }
.rtitle { height: 24px; background: #070707; display: flex; align-items: center; gap: 12px; padding: 0 7px; }
.rtitle h2 { flex: 1; }
.rtitle svg { width: 12px; height: 12px; }
.rbody { display: flex; gap: 8px; padding: 7px 19px 7px 6px; height: 97px; }
.rbody fieldset { border-color: #3c3c3c; }
.rbody legend { margin-left: 5px; padding: 0 1px; line-height: 14px; }
.stats { width: 153px; }
.stats dl { display: grid; grid-template-columns: 44px 14px 1fr; row-gap: 7px; padding: 5px 0 0 14px; line-height: 14px; }
.dur { width: 89px; text-align: center; }
.dur legend { text-align: left; }
.dur time { display: block; font-size: 15px; line-height: 20px; padding-top: 23px; font-family: "Liberation Sans", sans-serif; }
.aud { width: 41px; }
.aud legend { margin-left: 4px; }
.meters { display: flex; gap: 9px; padding-left: 5px; height: 51px; }
.meters i { width: 9px; border: 1px solid #3a3a3a; background: #333; }
.meters .lvl { background: repeating-linear-gradient(#38a465 0 3px, #1c4a30 3px 4px) bottom / 100% 20px no-repeat #333; }
.aicons { display: flex; justify-content: space-around; padding: 3px 3px 0; }
.aicons svg { width: 12px; height: 11px; }
.ctl { flex: 1; display: flex; justify-content: space-between; align-items: center; padding-left: 12px; }
.ctl svg { width: 22px; height: 22px; border-radius: 50%; background: #1277c8; }

.taskbar { height: 27px; flex: none; display: flex; align-items: stretch; background: #33271f; color: #f2f2f2; }
.taskbar svg { width: 14px; height: 14px; }
.pins { display: grid; grid-template-columns: 30px 30px 30px 32px 31px 31px 30px; justify-items: center; margin-right: 4px; }
.task { width: 127px; display: flex; align-items: center; gap: 4px; padding-left: 3px; border-bottom: 2px solid #e8b878; }
.taskbar .task svg { width: 13px; height: 13px; }
.task + .task { margin-left: 5px; }
.lone { width: 38px; display: grid; place-items: center; }
.task.active { background: #5c534c; width: 133px; padding-left: 6px; }
.tray { margin-left: auto; display: flex; align-items: center; gap: 12px; padding-right: 21px; }
.taskbar .tray .kb { width: 20px; height: 12px; }
.tray > button { width: 14px; display: grid; place-items: center; }
.tray .q { width: 18px; height: 18px; border-radius: 50%; background: #1f8fd0; border: 1px solid #fff; font-size: 12px; font-weight: bold; line-height: 14px; }
```
FILE: traces.js
```js
// Stream traces of the inlet pipe and its two branches.
const NS = "http://www.w3.org/2000/svg";
const SLOPE = 0.447;
const group = document.getElementById("traces");
const grads = document.getElementById("grads");
const C = { r: "#dc1208", o: "#e0740c", g: "#eaa60c", y: "#f6f20c", l: "#8fe60c", n: "#0cd41c", t: "#10b878", c: "#12cce4", b: "#1470c0", d: "#1018b0" };
let count = 0;

const onPipe = (xb, x) => [x, 650 - SLOPE * (x - xb)];

function smooth(p) {
  let d = `M${p[0]}`;
  for (let i = 0; i < p.length - 1; i++) {
    const a = p[i - 1] || p[i], b = p[i], c = p[i + 1], e = p[i + 2] || c;
    const k = Math.hypot(c[0] - b[0], c[1] - b[1]);
    const t1 = k / (Math.hypot(c[0] - a[0], c[1] - a[1]) || 1) / 3;
    const t2 = k / (Math.hypot(e[0] - b[0], e[1] - b[1]) || 1) / 3;
    d += `C${b[0] + (c[0] - a[0]) * t1},${b[1] + (c[1] - a[1]) * t1} ${c[0] - (e[0] - b[0]) * t2},${c[1] - (e[1] - b[1]) * t2} ${c}`;
  }
  return d;
}

function stroke(d, paint, width) {
  const el = document.createElementNS(NS, "path");
  el.setAttribute("d", d);
  el.setAttribute("stroke", paint);
  el.setAttribute("stroke-width", width);
  group.append(el);
}

function trace(colors, points, from = 850, to = 1200, width = 1.8) {
  const id = "tr" + count++;
  const g = document.createElementNS(NS, "linearGradient");
  g.id = id;
  g.setAttribute("gradientUnits", "userSpaceOnUse");
  g.setAttribute("x1", from); g.setAttribute("x2", to);
  g.setAttribute("y1", 0); g.setAttribute("y2", 0);
  [...colors].forEach((c, i) => {
    const s = document.createElementNS(NS, "stop");
    s.setAttribute("offset", i / Math.max(1, colors.length - 1));
    s.setAttribute("stop-color", C[c]);
    g.append(s);
  });
  grads.append(g);
  const d = smooth(points);
  stroke(d, "rgba(30,50,20,.6)", width + 0.9);
  stroke(d, `url(#${id})`, width);
}

const pipe = (colors, xb, x0, points, from, to, width) =>
  trace(colors, [onPipe(xb, xb), onPipe(xb, 600), onPipe(xb, x0 - 60), onPipe(xb, x0), ...points], from, to, width);

// Outer traces of the upper branch
pipe("ccccbc", 190, 880, [[923, 310], [940, 295], [967, 270], [993, 240], [1007, 223], [1017, 207], [1027, 187], [1043, 167], [1083, 135], [1108, 116]], 850, 1110);
pipe("nncttcb", 203, 880, [[925, 317], [955, 303], [980, 283], [997, 258], [1008, 232], [1018, 206], [1040, 180], [1078, 152], [1093, 128], [1100, 116]], 700, 1080);
trace("bbcb", [[966, 235], [955, 262], [945, 285], [928, 312], [911, 336], [909, 338], [930, 333], [960, 322], [990, 306], [1020, 283], [1045, 250], [1080, 195], [1133, 116]], 900, 1133);
trace("ctb", [[966, 235], [955, 272], [930, 306], [905, 337], [870, 355]], 880, 966);
trace("tcbbcc", [[1008, 345], [1018, 300], [1022, 265], [1024, 235], [1028, 210], [1031, 207], [1040, 219], [1050, 218], [1065, 205], [1090, 175], [1115, 142], [1140, 116]], 1005, 1140);
trace("tnbbd", [[1052, 350], [1067, 295], [1073, 250], [1073, 200], [1077, 155], [1086, 130], [1093, 116]], 1052, 1093);
pipe("nnnt", 210, 880, [[950, 320], [990, 300], [1030, 266], [1062, 225], [1100, 170], [1136, 116]], 850, 1140);
pipe("nnn", 215, 880, [[950, 322], [1000, 292], [1040, 256], [1075, 213], [1110, 165], [1144, 116]], 850, 1140);
pipe("llnnt", 233, 910, [[960, 320], [1010, 285], [1042, 248], [1058, 215], [1075, 165], [1100, 116]], 850, 1100);
pipe("lnnn", 237, 910, [[970, 316], [1020, 282], [1060, 238], [1100, 185], [1158, 116]], 850, 1150, 2.4);

const upperEnds = [1181, 1190, 1197, 1204, 1208, 1230, 1250];
const upperTail = ["ygc", "ynn", "ylnn", "gln", "gnt", "gyln", "gync"];
const rows = [
  [338, 358, 354, 354, 355, 356, 357, "oyylnc"], [350, 362, 357, 358, 363, 370, 374, "olynn"],
  [358, 363, 356, 362, 375, 387, 392, "olnncc"], [367, 371, 366, 365, 368, 373, 380, "oggyln"],
  [378, 376, 370, 369, 373, 378, 384, "rogyln"], [386, 379, 372, 373, 376, 381, 387, "yygyln"],
  [396, 384, 382, 386, 397, 409, 418, "rontcc"], [403, 387, 381, 381, 384, 386, 388, "royyln"],
  [419, 394, 392, 397, 404, 412, 420, "ronntc"], [437, 402, 396, 397, 402, 407, 410, "lnnlnn"],
  [443, 405, 399, 400, 404, 408, 413, "nnlnn"], [451, 408, 401, 401, 405, 413, 423, "ooylnc"],
  [459, 412, 404, 403, 405, 409, 411, "ogyynn"], [478, 417, 406, 404, 416, 434, 450, "yyylnc"]
];

function pipeColor(xb) {
  if (xb < 278) return "g";
  if (xb < 285) return "y";
  if (xb < 300) return "g";
  if (xb < 324) return "o";
  if (xb < 337) return "r";
  if (xb < 343) return "n";
  if (xb < 384) return "r";
  if (xb < 390) return "y";
  if (xb < 421) return "r";
  if (xb < 436) return "o";
  if (xb < 446) return "l";
  return "o";
}

// Dense core: the outer side feeds the upper branch, the inner side the lower one
let n = 0;
for (let xb = 248; xb <= 470; xb += 6, n++) {
  const c = pipeColor(xb);
  if (xb < 310 || (xb < 384 && n % 2)) {
    const i = Math.min(6, Math.floor((xb - 248) / 19));
    const X = upperEnds[i];
    const y = 298 + (X - 1181) * 0.17;
    pipe(c + (c === "r" ? "o" : c) + upperTail[i], xb, X - 240, [[X - 167, y], [X - 85, 216], [X, 116]], 830, X - 20, 1.7);
  } else {
    const r = rows.reduce((a, b) => Math.abs(b[0] - xb) < Math.abs(a[0] - xb) ? b : a);
    const j = (xb - r[0]) * 0.2;
    pipe(c + r[7], xb, 935, [[1000, r[1] + j], [1050, r[2] + j], [1100, r[3] + j], [1160, r[4]], [1220, r[5]], [1280, r[6]]], 850, 1250, 1.7);
  }
}
for (const xb of [257, 291, 312, 330, 365, 376, 405, 416, 430, 458]) {
  stroke(smooth([onPipe(xb, xb), onPipe(xb, 940)]), "rgba(245,245,240,.75)", 0.8);
}
for (const xb of [263, 273, 297, 320, 355, 394, 424, 449, 463]) {
  stroke(smooth([onPipe(xb, xb), onPipe(xb, 960)]), "rgba(40,40,10,.45)", 0.8);
}

// Traces that stand out above the core
trace("gogln", [[900, 372], [960, 345], [1010, 318], [1060, 275], [1110, 215], [1190, 116]], 900, 1190);
trace("tcbdbc", [[1040, 352], [1062, 325], [1100, 278], [1155, 214], [1205, 155], [1240, 116]], 1040, 1240, 2.2);
trace("gggnntcc", [[1030, 375], [1055, 347], [1090, 310], [1130, 265], [1175, 212], [1222, 152], [1252, 116]], 1030, 1250);
trace("ggnbb", [[990, 362], [1030, 325], [1075, 270], [1110, 218], [1145, 165], [1182, 116]], 990, 1180);
pipe("nntt", 340, 860, [[920, 390], [950, 381], [990, 377]], 850, 990);
trace("tccbdbcc", [[990, 377], [1020, 381], [1050, 392], [1080, 410], [1110, 430], [1140, 451], [1150, 455], [1158, 449], [1170, 438], [1200, 435], [1280, 436]], 990, 1250);
pipe("yyyll", 388, 930, [[1000, 380], [1060, 377], [1140, 384], [1280, 388]], 850, 1280);
pipe("llnnn", 440, 920, [[985, 401], [1035, 394], [1100, 399], [1190, 406], [1280, 410]], 850, 1150, 2.4);
pipe("yyyyl", 479, 920, [[980, 426], [1030, 411], [1090, 404], [1118, 404]], 850, 1118);
trace("llncc", [[1118, 404], [1160, 415], [1210, 433], [1250, 446], [1280, 451]], 1118, 1280);
trace("nbddddb", [[880, 385], [930, 358], [970, 343], [1005, 340], [1045, 343], [1085, 353], [1140, 375], [1200, 402], [1240, 418], [1280, 431]], 900, 1280, 2.4);
pipe("llnnntc", 500, 920, [[980, 441], [1020, 432], [1060, 429], [1110, 433], [1150, 440], [1200, 449], [1280, 456]], 850, 1250);
pipe("nlnnntcc", 504, 920, [[980, 442], [1030, 433], [1070, 431], [1100, 435], [1150, 447], [1200, 461], [1240, 469], [1280, 473]], 850, 1250);
pipe("yyln", 509, 920, [[975, 443], [1015, 435], [1060, 433], [1110, 436], [1170, 444], [1280, 456]], 850, 1150);
pipe("llntbdbc", 522, 915, [[975, 447], [1010, 438], [1040, 436], [1070, 442], [1110, 458], [1145, 477], [1165, 482], [1180, 479], [1190, 466], [1210, 458], [1240, 453], [1280, 451]], 850, 1250);
```
